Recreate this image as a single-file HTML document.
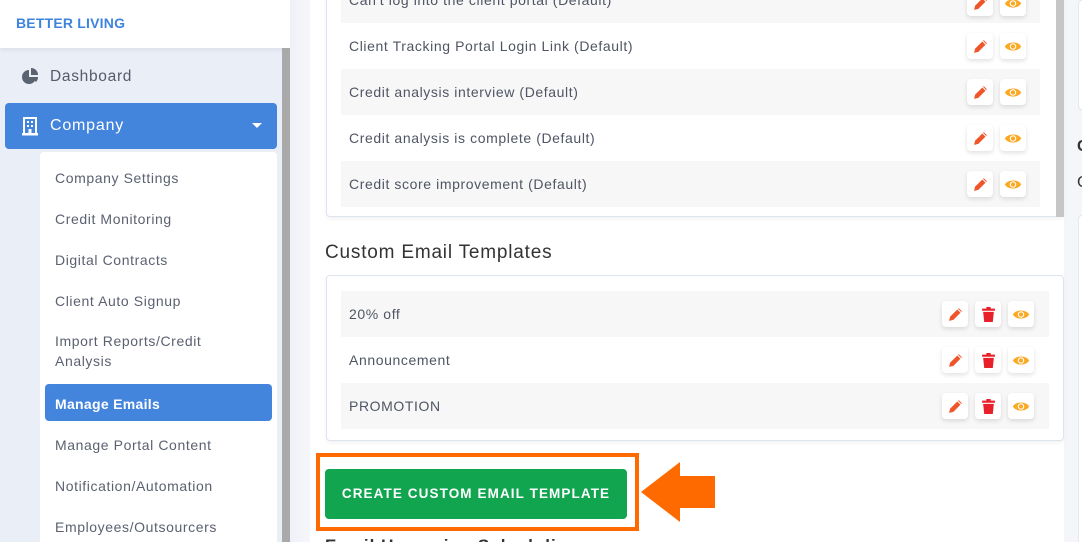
<!DOCTYPE html>
<html><head><meta charset="utf-8"><style>
*{box-sizing:border-box;margin:0;padding:0}
html,body{width:1082px;height:542px;overflow:hidden}
body{position:relative;background:#fff;font-family:"Liberation Sans",sans-serif;color:#4f5563}
.abs{position:absolute}
.side{left:0;top:0;width:290px;height:542px;background:#e9eef7}
.logo{left:0;top:0;width:290px;height:48px;background:#fff;box-shadow:0 2px 4px rgba(0,0,0,.06)}
.logo span{position:absolute;left:16px;top:15px;font-size:14px;font-weight:bold;color:#3f84dc;letter-spacing:.2px}
.sub{left:40px;top:152px;width:237px;height:400px;background:#fff;border-radius:4px}
.si{position:absolute;left:55px;font-size:14px;color:#5b6170;letter-spacing:.6px;white-space:nowrap}
.row{position:absolute;height:46px;font-size:14px;color:#4f5563;line-height:46px;padding-left:8px;letter-spacing:.6px;white-space:nowrap}
.g{background:#f7f7f7}
.btn{position:absolute;width:26px;height:26px;background:#fff;border-radius:4px;box-shadow:0 2px 5px rgba(0,0,0,.12);display:flex;align-items:center;justify-content:center}
</style></head><body>
<div class="abs side"></div>
<div class="abs logo"><span>BETTER LIVING</span></div>
<div class="abs" style="left:282px;top:48px;width:8px;height:494px;background:#a9a9a9"></div>
<svg class="abs" style="left:21px;top:68px" width="20" height="18" viewBox="0 0 20 18"><path d="M8 2A7 7 0 1 0 15 9H8Z" fill="#5a6372"/><path d="M10 0A7 7 0 0 1 17 7H10Z" fill="#5a6372"/><path d="M10 9h7a7 7 0 0 1-2 5Z" fill="#5a6372"/></svg>
<div class="abs" style="left:50px;top:68px;font-size:15.5px;color:#555b68;letter-spacing:.7px">Dashboard</div>
<div class="abs" style="left:5px;top:103px;width:272px;height:46px;background:#4384dc;border-radius:4px"></div>
<svg class="abs" style="left:22px;top:117px" width="16" height="19" viewBox="0 0 16 19"><rect x="2" y="1" width="12" height="16" fill="none" stroke="#fff" stroke-width="2"/><rect x="0" y="16" width="16" height="2.5" fill="#fff"/><g fill="#fff"><rect x="5" y="4" width="2" height="2"/><rect x="9" y="4" width="2" height="2"/><rect x="5" y="8" width="2" height="2"/><rect x="9" y="8" width="2" height="2"/><rect x="6.5" y="12" width="3" height="5"/></g></svg>
<div class="abs" style="left:50px;top:117px;font-size:16px;color:#fff;letter-spacing:.8px">Company</div>
<div class="abs" style="left:252px;top:123px;width:0;height:0;border-left:5px solid transparent;border-right:5px solid transparent;border-top:5px solid #fff"></div>
<div class="abs sub"></div>
<div class="si" style="top:170px">Company Settings</div>
<div class="si" style="top:211px">Credit Monitoring</div>
<div class="si" style="top:252px">Digital Contracts</div>
<div class="si" style="top:293px">Client Auto Signup</div>
<div class="si" style="line-height:20px;top:331px">Import Reports/Credit<br>Analysis</div>
<div class="abs" style="left:45px;top:384px;width:227px;height:37px;background:#4384dc;border-radius:4px"></div>
<div class="si" style="top:396px;color:#fff;font-weight:bold;letter-spacing:.3px">Manage Emails</div>
<div class="si" style="top:437px">Manage Portal Content</div>
<div class="si" style="top:478px">Notification/Automation</div>
<div class="si" style="top:519px">Employees/Outsourcers</div>

<div class="abs" style="left:290px;top:0;width:20px;height:542px;background:linear-gradient(90deg,#eef1f8,#f6f7fb)"></div>
<div class="abs" style="left:1064px;top:0;width:18px;height:542px;background:#f5f6f9"></div>
<div class="abs" style="left:1078px;top:0;width:10px;height:110px;background:#fff;border:1px solid #e2e7f0;border-radius:4px"></div>
<div class="abs" style="left:1077px;top:138px;font-size:16px;font-weight:bold;color:#333">C</div>
<div class="abs" style="left:1077px;top:174px;font-size:16px;color:#333">C</div>
<div class="abs" style="left:1078px;top:215px;width:10px;height:330px;background:#fff;border:1px solid #e2e7f0;border-radius:4px"></div>

<div class="abs" style="left:326px;top:-10px;width:738px;height:227px;background:#fff;border:1px solid #dde4ef;border-radius:0 0 4px 4px;box-shadow:0 2px 4px rgba(0,0,0,.05)"></div>
<div class="abs" style="left:1056px;top:0;width:8px;height:217px;background:#c6c6c6"></div>
<div class="row g" style="left:341px;top:-23px;width:699px">Can't log into the client portal (Default)</div>
<div class="row" style="left:341px;top:23px;width:699px">Client Tracking Portal Login Link (Default)</div>
<div class="row g" style="left:341px;top:69px;width:699px">Credit analysis interview (Default)</div>
<div class="row" style="left:341px;top:115px;width:699px">Credit analysis is complete (Default)</div>
<div class="row g" style="left:341px;top:161px;width:699px">Credit score improvement (Default)</div>

<div class="abs" style="left:325px;top:242px;font-size:19px;color:#333;letter-spacing:.8px">Custom Email Templates</div>
<div class="abs" style="left:326px;top:275px;width:738px;height:166px;background:#fff;border:1px solid #dde4ef;border-radius:4px;box-shadow:0 2px 4px rgba(0,0,0,.05)"></div>
<div class="row g" style="left:341px;top:291px;width:708px">20% off</div>
<div class="row" style="left:341px;top:337px;width:708px">Announcement</div>
<div class="row g" style="left:341px;top:383px;width:708px">PROMOTION</div>

<div id="btns"></div>

<div class="abs" style="left:316px;top:453px;width:323px;height:78px;border:4px solid #ff6a00"></div>
<div class="abs" style="left:325px;top:469px;width:302px;height:50px;background:#12a550;border-radius:4px;color:#fff;font-size:13.5px;font-weight:bold;text-align:center;line-height:50px;letter-spacing:1.1px;white-space:nowrap">CREATE CUSTOM EMAIL TEMPLATE</div>
<svg class="abs" style="left:640px;top:461px" width="76" height="62" viewBox="0 0 76 62"><path d="M1 31L40 1V15H75V47H40V61Z" fill="#ff6a00"/></svg>
<div class="abs" style="left:325px;top:536px;font-size:17px;font-weight:bold;color:#333;letter-spacing:1px">Email Upcoming Scheduling</div>

<script>
var pen='<svg width="15" height="15" viewBox="0 0 14 14"><path d="M10 1l3 3-8 8-4 1 1-4z" fill="#f0552a"/><path d="M9 2l3 3" stroke="#fff" stroke-width="1"/></svg>';
var eye='<svg width="18" height="13" viewBox="0 0 16 12"><path d="M0.5 6C3 1 13 1 15.5 6C13 11 3 11 0.5 6Z" fill="#fba823"/><circle cx="8" cy="6" r="3" fill="#fff"/><circle cx="8" cy="6" r="2" fill="#fba823"/></svg>';
var trash='<svg width="13" height="15" viewBox="0 0 12 14"><rect x="0" y="1.5" width="12" height="2" fill="#e8202a"/><rect x="4" y="0" width="4" height="2" fill="#e8202a"/><path d="M1 4.5h10l-1 9.5H2z" fill="#e8202a"/></svg>';
var h='';
[-10,33,79,125,171].forEach(function(y){h+='<div class="btn" style="left:967px;top:'+y+'px">'+pen+'</div><div class="btn" style="left:1000px;top:'+y+'px">'+eye+'</div>';});
[301,347,393].forEach(function(y){h+='<div class="btn" style="left:942px;top:'+y+'px">'+pen+'</div><div class="btn" style="left:975px;top:'+y+'px">'+trash+'</div><div class="btn" style="left:1008px;top:'+y+'px">'+eye+'</div>';});
document.getElementById('btns').innerHTML=h;
</script>
</body></html>
